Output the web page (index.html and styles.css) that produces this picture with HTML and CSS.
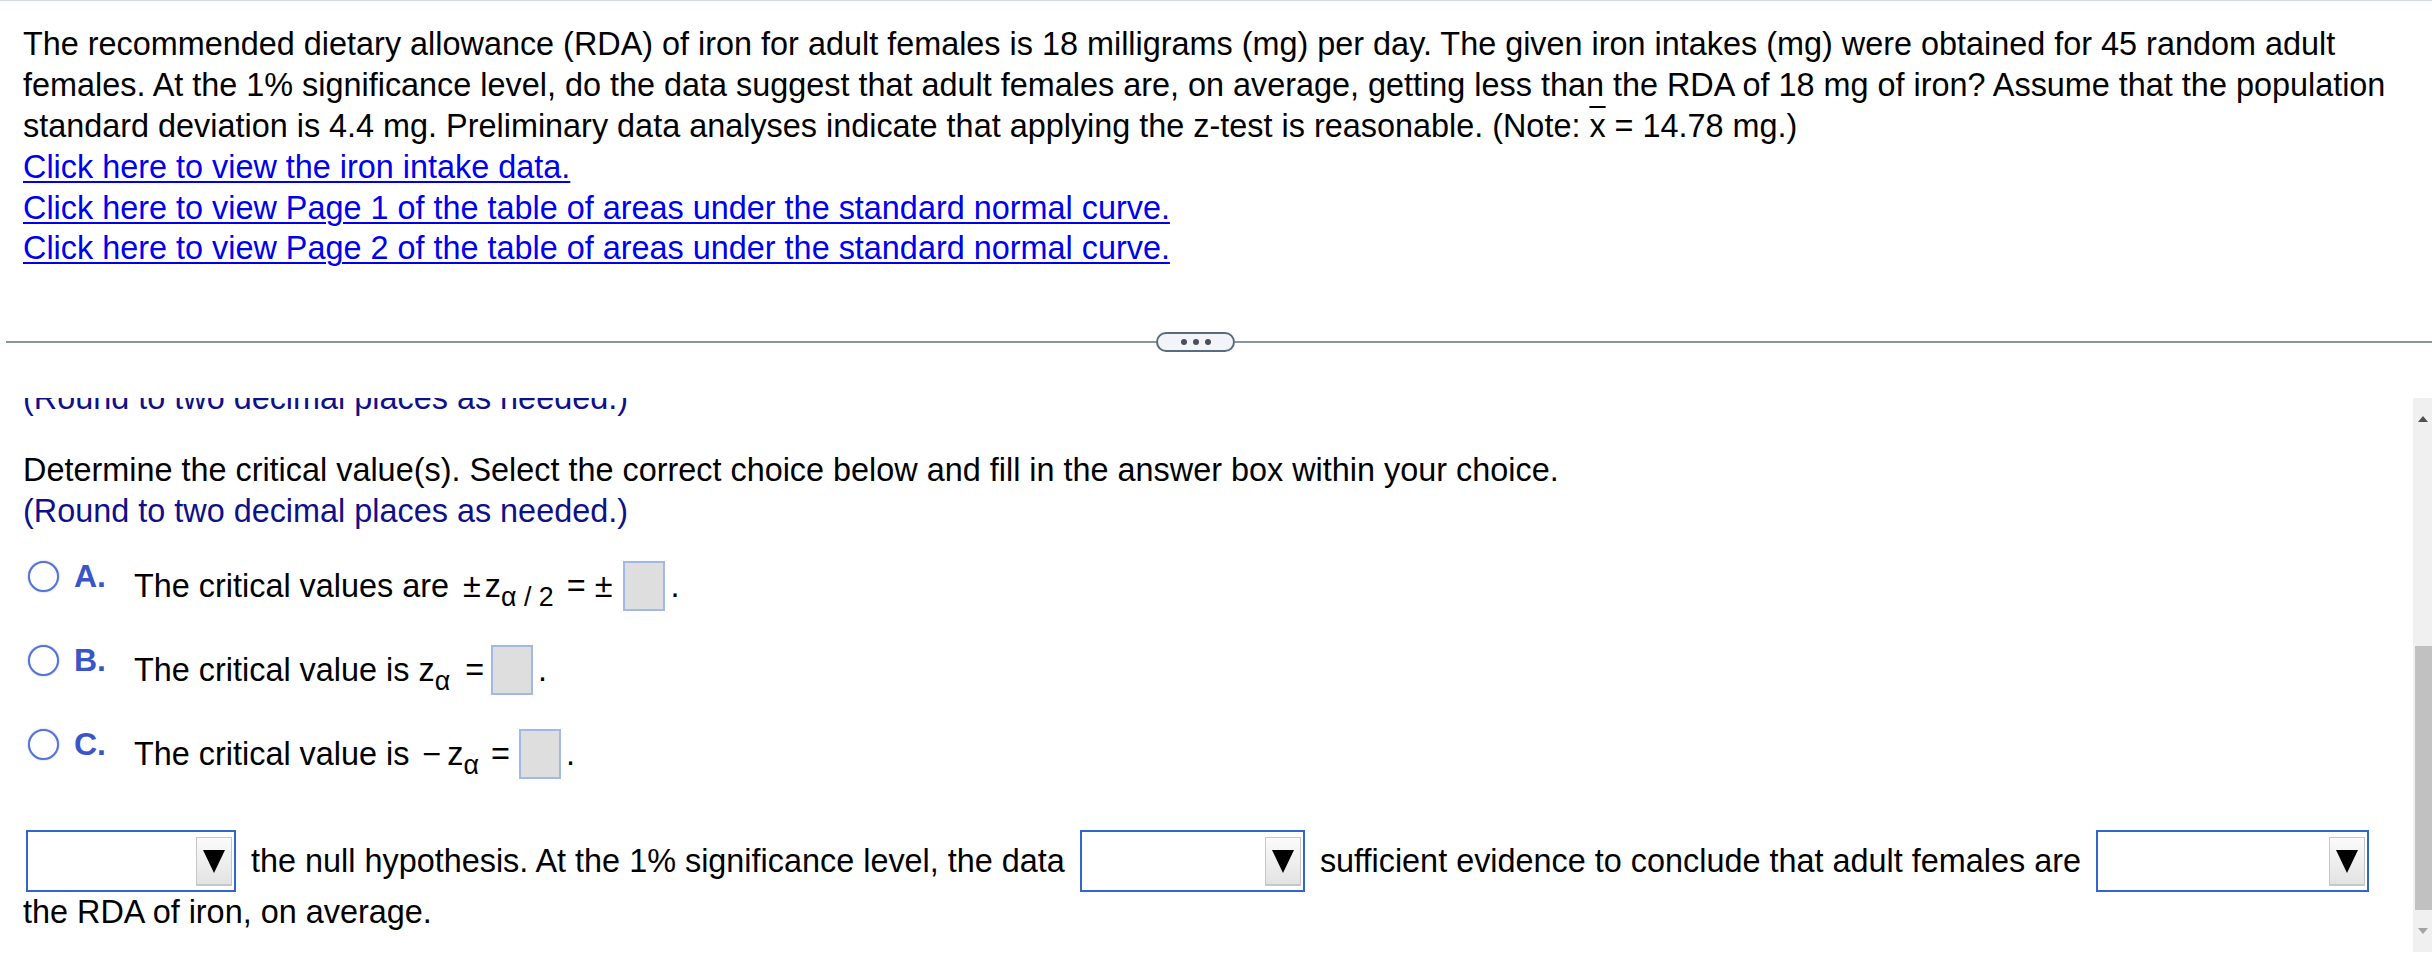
FILE: index.html
```html
<!DOCTYPE html>
<html lang="en">
<head>
<meta charset="utf-8">
<title>Iron intake z-test</title>
<link rel="stylesheet" href="styles.css">
</head>
<body>
<div class="topline"></div>
<main class="page">
  <section class="stem">
    <p class="stem-text">The recommended dietary allowance (RDA) of iron for adult females is 18 milligrams (mg) per day. The given iron intakes (mg) were obtained for 45 random adult females. At the 1% significance level, do the data suggest that adult females are, on average, getting less than the RDA of 18 mg of iron? Assume that the population standard deviation is 4.4 mg. Preliminary data analyses indicate that applying the z-test is reasonable. (Note: <span class="xbar">x</span> = 14.78 mg.)</p>
    <a class="link" href="#">Click here to view the iron intake data.</a>
    <a class="link" href="#">Click here to view Page 1 of the table of areas under the standard normal curve.</a>
    <a class="link" href="#">Click here to view Page 2 of the table of areas under the standard normal curve.</a>
  </section>

  <div class="divider">
    <span class="rule rule-left"></span>
    <button class="more" type="button" aria-label="More"><span class="dot"></span><span class="dot"></span><span class="dot"></span></button>
    <span class="rule rule-right"></span>
  </div>

  <div class="pane">
    <div class="viewport">
      <div class="scroller">
        <p class="hint clipped">(Round to two decimal places as needed.)</p>
        <p class="prompt">Determine the critical value(s). Select the correct choice below and fill in the answer box within your choice.<br><span class="hint">(Round to two decimal places as needed.)</span></p>

        <ul class="choices">
          <li class="choice">
            <span class="key"><span class="radio"></span><span class="letter">A.</span></span>
            <span class="line">The critical values are <span class="pm1">±</span>z<sub>α / 2</sub> <span class="eq1">=</span> ±</span>
            <span class="box box-a"></span><span class="line period">.</span>
          </li>
          <li class="choice">
            <span class="key"><span class="radio"></span><span class="letter">B.</span></span>
            <span class="line">The critical value is z<sub>α</sub> <span class="eq2">=</span></span>
            <span class="box box-b"></span><span class="line period">.</span>
          </li>
          <li class="choice">
            <span class="key"><span class="radio"></span><span class="letter">C.</span></span>
            <span class="line">The critical value is <span class="minus">−</span>z<sub>α</sub> <span class="eq3">=</span></span>
            <span class="box box-c"></span><span class="line period">.</span>
          </li>
        </ul>

        <div class="fill-row">
          <span class="select sel-1"><span class="arrow"><svg viewBox="0 0 22 24" width="22" height="24"><polygon points="0,1 22,1 11,24" fill="#000"/></svg></span></span>
          <span class="line">the null hypothesis. At the 1% significance level, the data</span>
          <span class="select sel-2"><span class="arrow"><svg viewBox="0 0 22 24" width="22" height="24"><polygon points="0,1 22,1 11,24" fill="#000"/></svg></span></span>
          <span class="line">sufficient evidence to conclude that adult females are</span>
          <span class="select sel-3"><span class="arrow"><svg viewBox="0 0 22 24" width="22" height="24"><polygon points="0,1 22,1 11,24" fill="#000"/></svg></span></span>
        </div>
        <p class="tail">the RDA of iron, on average.</p>
      </div>
    </div>
    <div class="scrollbar">
      <span class="sb-btn sb-up"><svg viewBox="0 0 10 6" width="10" height="6"><polygon points="0,6 10,6 5,0" fill="#505050"/></svg></span>
      <span class="sb-track"></span>
      <span class="sb-thumb"></span>
      <span class="sb-btn sb-down"><svg viewBox="0 0 10 6" width="10" height="6"><polygon points="0,0 10,0 5,6" fill="#a3a3a3"/></svg></span>
    </div>
  </div>
</main>
</body>
</html>
```
FILE: styles.css
```css
* { box-sizing: border-box; }
html, body { margin: 0; padding: 0; background: #fff; }
body {
  width: 2432px;
  height: 980px;
  overflow: hidden;
  font-family: "Liberation Sans", Arial, sans-serif;
  font-size: 32.4px;
  line-height: 40.8px;
  color: #000;
}
.topline { height: 1px; background: #d3d8e0; }

.stem { padding: 23.4px 12px 0 23px; }
.stem-text { margin: 0; }
.xbar { text-decoration: overline; text-decoration-thickness: 2px; }
.link {
  display: block;
  width: max-content;
  color: #0000ee;
  text-decoration: underline;
  text-decoration-thickness: 2px;
  text-underline-offset: 3px;
}

.divider {
  display: flex;
  align-items: center;
  height: 20px;
  margin-top: 62.8px;
  padding-left: 6px;
}
.rule { height: 2px; background: #8a93a2; }
.rule-left { width: 1150px; }
.rule-right { flex: 1; }
.more {
  display: flex;
  align-items: center;
  justify-content: center;
  gap: 6px;
  width: 79px;
  height: 20px;
  padding: 0;
  border: 2px solid #5b6a7e;
  border-radius: 10px;
  background: #f3f4f7;
}
.dot { width: 6px; height: 6px; border-radius: 50%; background: #474f5c; }

.pane {
  display: flex;
  height: 554px;
  margin-top: 46px;
}
.viewport { flex: 1; overflow: hidden; }
.scroller { margin-top: -19.6px; padding-left: 23px; }
.scroller p { margin: 0; }
.hint { color: #10108a; }
.prompt { margin-top: 31.2px !important; }

.choices {
  list-style: none;
  margin: 30px 0 0;
  padding: 0;
  display: flex;
  flex-direction: column;
  gap: 35px;
}
.choice {
  display: flex;
  align-items: center;
  height: 49px;
}
.key {
  display: flex;
  align-items: center;
  gap: 15px;
  width: 111px;
  height: 31px;
  padding-left: 5px;
  align-self: flex-start;
  margin-top: -0.5px;
}
.radio {
  flex: none;
  width: 31px;
  height: 31px;
  border-radius: 50%;
  border: 2.5px solid #5574d8;
  box-shadow: 0 0 1.5px rgba(85, 116, 216, 0.7);
  background: #fff;
}
.letter {
  font-weight: bold;
  font-size: 32px;
  color: #3a55c8;
  line-height: 31px;
}
.line { white-space: nowrap; }
sub {
  font-size: 26.8px;
  line-height: 0;
  vertical-align: -9px;
}
.pm1 { margin: 0 4px 0 5px; }
.eq1 { margin-left: 4px; }
.eq2 { margin-left: 6px; }
.minus { margin: 0 6px 0 4px; }
.eq3 { margin-left: 3px; }

.box {
  flex: none;
  width: 42px;
  height: 50px;
  background: #dedede;
  border: 2px solid #a2b8e6;
}
.box-a { margin-left: 11px; }
.box-b { margin-left: 7px; }
.box-c { margin-left: 9px; }
.period { margin-left: 5px; }

.fill-row {
  display: flex;
  align-items: center;
  gap: 15px;
  height: 62px;
  margin-top: 51px;
  padding-left: 3px;
}
.select {
  flex: none;
  display: flex;
  justify-content: flex-end;
  height: 62px;
  padding: 5px 2px 4px;
  border: 2px solid #3366cc;
  background: #fff;
}
.sel-1 { width: 210px; }
.sel-2 { width: 225px; }
.sel-3 { width: 273px; }
.arrow {
  display: flex;
  align-items: center;
  justify-content: center;
  width: 36px;
  border: 1px solid #c6c6c6;
  border-bottom-width: 2px;
  background: linear-gradient(#fbfbfb, #e3e3e3);
}

.scrollbar {
  display: flex;
  flex-direction: column;
  width: 19px;
  background: #f0f0f0;
}
.sb-btn {
  display: flex;
  align-items: center;
  justify-content: center;
  height: 42px;
}
.sb-track { height: 206px; }
.sb-thumb {
  height: 264px;
  margin-left: 2px;
  background: #c1c1c1;
}
```
